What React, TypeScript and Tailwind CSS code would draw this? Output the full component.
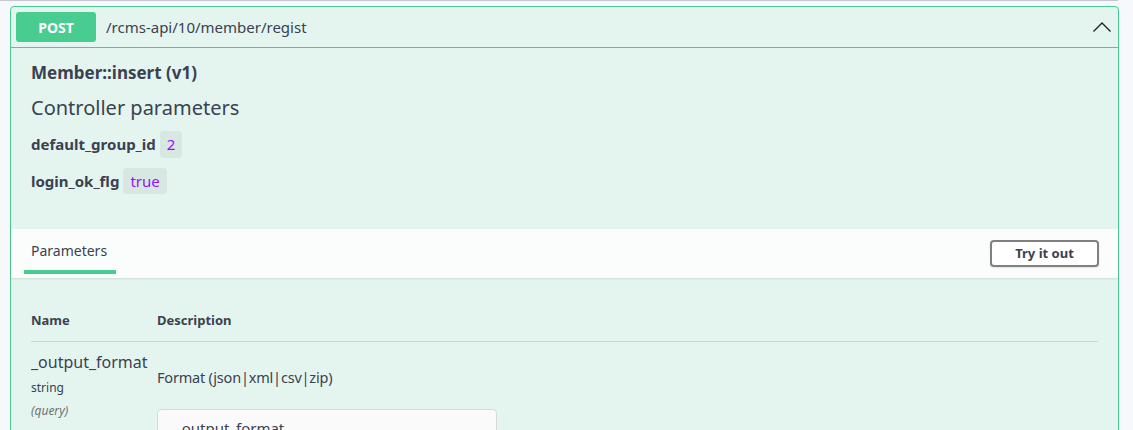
const FONT = { fontFamily: '"Noto Sans", "Noto Sans CJK JP", sans-serif' };

const App = () => {
  return (
    <div className="min-h-[430px] w-[1133px] overflow-hidden bg-[#f7f8fc] text-[#3b4151]" style={FONT}>
      <div className="h-px w-[1118px] bg-[#c4c6d0]" />
      <div className="ml-[10px] mt-[5px] w-[1109px] rounded-[4px] border border-[#49cc90] bg-[#e4f5ef]">
        {/* summary */}
        <div className="flex h-[41px] items-center border-b border-[#49cc90] pl-[5px] pr-[6px]">
          <span className="flex h-[30px] w-[80px] items-center justify-center rounded-[3px] bg-[#49cc90] text-[14px] font-bold text-white">
            POST
          </span>
          <span className="ml-[10px] flex-1 text-[15px]">/rcms-api/10/member/regist</span>
          <svg width="20" height="12" viewBox="0 0 20 12" fill="none" stroke="#222" strokeWidth="1.4">
            <polyline points="1.5,10.5 10,2 18.5,10.5" />
          </svg>
        </div>

        {/* description */}
        <div className="px-[20px] pb-[35px] pt-[12px]">
          <h4 className="text-[17px] font-bold leading-[26px]">Member::insert (v1)</h4>
          <h3 className="mt-[8px] text-[20px] leading-[28px]">Controller parameters</h3>
          <div className="mt-[9px] flex items-center gap-[4px]">
            <span className="text-[15px] font-bold">default_group_id</span>
            <code className="rounded-[4px] bg-[#d8e7e2] px-[7px] py-[2px] text-[15px] text-[#9012fe]" style={FONT}>2</code>
          </div>
          <div className="mt-[10px] flex items-center gap-[4px]">
            <span className="text-[15px] font-bold">login_ok_flg</span>
            <code className="rounded-[4px] bg-[#d8e7e2] px-[7px] py-[2px] text-[15px] text-[#9012fe]" style={FONT}>true</code>
          </div>
        </div>

        {/* tab header */}
        <div className="flex h-[49px] items-center justify-between bg-[#fbfdfc] pl-[13px] pr-[19px] shadow-[0_1px_2px_rgba(0,0,0,0.1)]">
          <div className="flex h-full flex-col justify-end">
            <span className="px-[7px] pb-[9px] text-[14px]">Parameters</span>
            <div className="mb-[4px] h-[4px] w-[92px] bg-[#49cc90]" />
          </div>
          <button className="h-[27px] w-[109px] rounded-[4px] border-2 border-[#808080] bg-white text-[13px] font-bold text-[#3b4151] shadow-[0_1px_2px_rgba(0,0,0,0.1)]">
            Try it out
          </button>
        </div>

        {/* parameters table */}
        <div className="px-[20px] pt-[33px]">
          <div className="flex border-b border-[#c6d6d0] pb-[10px] text-[13px] font-bold">
            <span className="w-[126px]">Name</span>
            <span>Description</span>
          </div>
          <div className="flex pt-[8px]">
            <div className="w-[126px]">
              <div className="text-[16px] leading-[24px]">_output_format</div>
              <div className="mt-[3px] text-[12px] leading-[22px]">string</div>
              <div className="text-[12px] italic leading-[24px] text-[#707070]">(query)</div>
            </div>
            <div className="pt-[16px]">
              <div className="text-[14.5px] leading-[22px] tracking-[-0.2px]">Format (json|xml|csv|zip)</div>
              <input
                placeholder="_output_format"
                className="mt-[21px] h-[38px] w-[340px] rounded-[4px] border border-[#d9d9d9] bg-[#fafafa] px-[17px] text-[15px] placeholder:text-[#3b4151]"
                style={FONT}
              />
            </div>
          </div>
        </div>
      </div>
    </div>
  );
};

export default App;
